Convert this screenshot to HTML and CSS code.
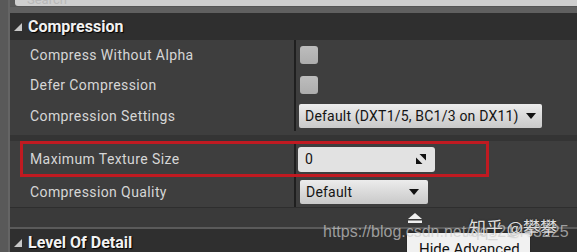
FILE: index.html
```html
<!DOCTYPE html>
<html lang="en">
<head>
    <meta charset="UTF-8">
    <title>Details - Compression</title>
    <link rel="stylesheet" href="styles.css">
</head>
<body>
    <div class="app">
        <div class="gutter"></div>
        <div class="panel">
            <div class="search-wrap"><div class="search">Search</div></div>
            <div class="band"></div>

            <div class="category">
                <svg class="expander" width="8" height="8" viewBox="0 0 8 8"><polygon points="8,0 8,8 0,8"/></svg>
                <span class="category-title">Compression</span>
            </div>

            <div class="row">
                <div class="name">Compress Without Alpha</div>
                <div class="value"><span class="checkbox"></span></div>
            </div>
            <div class="row">
                <div class="name">Defer Compression</div>
                <div class="value"><span class="checkbox"></span></div>
            </div>
            <div class="row row-last">
                <div class="name">Compression Settings</div>
                <div class="value">
                    <div class="combo combo-wide">
                        <span>Default (DXT1/5, BC1/3 on DX11)</span>
                        <svg class="arrow" width="10" height="6" viewBox="0 0 10 6"><polygon points="0,0 10,0 5,6"/></svg>
                    </div>
                </div>
            </div>

            <div class="spacer"></div>

            <div class="row row-tall">
                <div class="name">Maximum Texture Size</div>
                <div class="value">
                    <div class="number-box">
                        <span>0</span>
                        <svg class="spin" width="10" height="10" viewBox="0 0 10 10">
                            <polygon points="3.5,0 10,0 10,6.5"/>
                            <polygon points="0,3.5 0,10 6.5,10"/>
                        </svg>
                    </div>
                </div>
            </div>
            <div class="row">
                <div class="name">Compression Quality</div>
                <div class="value">
                    <div class="combo combo-short">
                        <span>Default</span>
                        <svg class="arrow" width="10" height="6" viewBox="0 0 10 6"><polygon points="0,0 10,0 5,6"/></svg>
                    </div>
                </div>
            </div>

            <div class="advanced">
                <svg class="advanced-arrow" width="14" height="10" viewBox="0 0 14 10">
                    <polygon points="7,0 14,6 0,6"/>
                    <rect x="0" y="7.5" width="14" height="2.5"/>
                </svg>
            </div>
            <div class="separator"></div>

            <div class="category">
                <svg class="expander" width="8" height="8" viewBox="0 0 8 8"><polygon points="8,0 8,8 0,8"/></svg>
                <span class="category-title">Level Of Detail</span>
            </div>
        </div>
    </div>

    <!-- annotation and overlays -->
    <div class="highlight"></div>
    <div class="tooltip">Hide Advanced</div>
    <div class="mark-zhihu">知乎 @攀攀</div>
    <div class="mark-csdn">https://blog.csdn.net/qq_21443225</div>
</body>
</html>
```

FILE: styles.css
```css
* {
    box-sizing: border-box;
}

body {
    margin: 0;
    padding: 0;
    width: 577px;
    height: 252px;
    overflow: hidden;
    background-color: #595959;
    font-family: Roboto, "Noto Sans", sans-serif;
    position: relative;
}

.app {
    display: flex;
    height: 252px;
}

.gutter {
    width: 10px;
    flex: 0 0 10px;
    background-color: #595959;
    border-right: 2px solid #656565;
}

.panel {
    flex: 1;
    display: flex;
    flex-direction: column;
    min-width: 0;
}

.search-wrap {
    height: 7px;
    flex: 0 0 7px;
    padding-left: 5px;
    background-color: #595959;
    border-bottom: 1px solid #555555;
}

.search {
    height: 6px;
    padding: 0 0 0 12px;
    background-color: #cfcfcf;
    border-radius: 0 0 0 3px;
    color: #b9b9b9;
    font-size: 13px;
    line-height: 0;
    overflow: hidden;
}

.band {
    height: 6px;
    flex: 0 0 6px;
    background-color: #606060;
}

.category {
    height: 27px;
    flex: 0 0 27px;
    display: flex;
    align-items: center;
    gap: 6px;
    padding-left: 4px;
    background-color: #2f2f2f;
}

.expander {
    fill: #c8c8c8;
    margin-top: 1px;
}

.category-title {
    font-size: 16px;
    font-weight: 700;
    color: #f2f2f2;
    text-shadow: 1px 1px 1px #000000;
}

.row {
    display: flex;
    height: 30px;
    flex: 0 0 30px;
    background-color: #3e3e3e;
}

.row-last {
    height: 35px;
    flex-basis: 35px;
    padding-bottom: 4px;
}

.row-tall {
    height: 36px;
    flex-basis: 36px;
}

.name {
    width: 286px;
    flex: 0 0 286px;
    display: flex;
    align-items: center;
    padding-left: 20px;
    font-size: 14px;
    letter-spacing: 0.4px;
    color: #d6d6d6;
    border-right: 2px solid #1f1f1f;
}

.value {
    flex: 1;
    display: flex;
    align-items: center;
    padding-left: 4px;
}

.checkbox {
    width: 18px;
    height: 18px;
    border-radius: 3px;
    background: linear-gradient(#bdbdbd, #adadad);
}

.combo {
    height: 24px;
    display: flex;
    align-items: center;
    justify-content: space-between;
    padding: 0 6px 0 6px;
    border-radius: 2px;
    background: linear-gradient(#ececec, #c9c9c9);
    font-size: 14px;
    letter-spacing: 0.2px;
    color: #141414;
}

.combo-wide {
    width: 243px;
    margin-left: -1px;
}

.combo-short {
    width: 128px;
    padding-right: 9px;
}

.arrow {
    fill: #111111;
}

.number-box {
    width: 137px;
    height: 25px;
    margin-left: -2px;
    display: flex;
    align-items: center;
    justify-content: space-between;
    padding: 0 9px 0 7px;
    border-radius: 3px;
    background-color: #e2e2e2;
    font-size: 14px;
    color: #141414;
}

.spin {
    fill: #111111;
}

.spacer {
    height: 6px;
    flex: 0 0 6px;
    background-color: #343434;
}

.advanced {
    height: 20px;
    flex: 0 0 20px;
    display: flex;
    align-items: center;
    padding-left: 398px;
    background-color: #3a3a3a;
    border-top: 1px solid #2e2e2e;
}

.advanced-arrow {
    fill: #f0f0f0;
}

.separator {
    height: 2px;
    flex: 0 0 2px;
    background-color: #5a5a5a;
}

/* overlays */
.highlight {
    position: absolute;
    left: 20px;
    top: 141px;
    width: 469px;
    height: 36px;
    border: 3px solid #c01a21;
}

.tooltip {
    position: absolute;
    left: 406px;
    top: 232px;
    width: 125px;
    height: 30px;
    padding: 7px 0 0 12px;
    background-color: #f1f1f1;
    border: 1px solid #2a2a2a;
    font-size: 15px;
    color: #111111;
}

.mark-zhihu {
    position: absolute;
    left: 469px;
    top: 214px;
    font-family: "Noto Sans CJK SC", sans-serif;
    font-size: 17px;
    color: rgba(255, 255, 255, 0.85);
    text-shadow: 0 0 2px rgba(0, 0, 0, 0.5);
}

.mark-csdn {
    position: absolute;
    left: 323px;
    top: 223px;
    font-family: "Liberation Sans", Arial, sans-serif;
    font-size: 16px;
    color: rgba(205, 205, 205, 0.7);
    white-space: nowrap;
}
```
